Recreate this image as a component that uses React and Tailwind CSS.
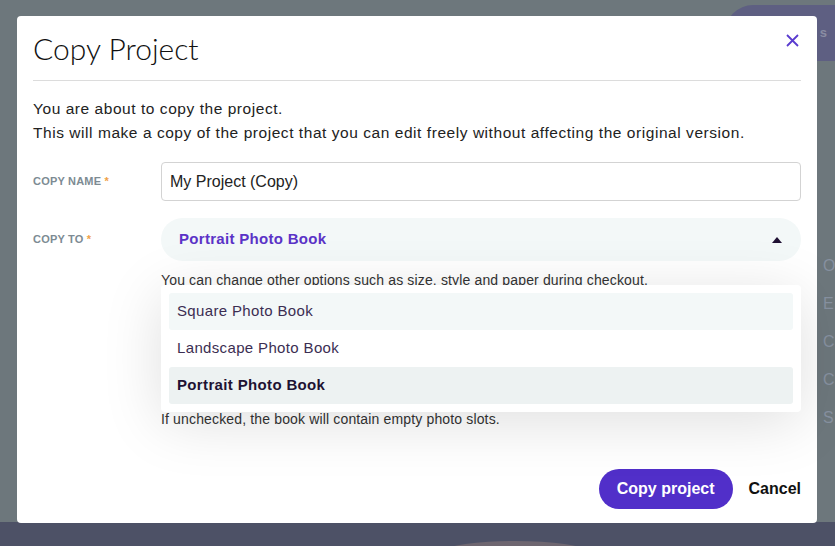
import React from 'react';

const sans = { fontFamily: '"Liberation Sans", Arial, sans-serif' };

const options = [
  { label: 'Square Photo Book', hover: true },
  { label: 'Landscape Photo Book' },
  { label: 'Portrait Photo Book', selected: true },
];

function FieldLabel({ children }) {
  return (
    <span className="w-[128px] shrink-0 text-[11px] font-bold uppercase tracking-[0.2px] text-[#7d8b93]">
      {children} <span className="text-[#f0a24a]">*</span>
    </span>
  );
}

export default function App() {
  return (
    <div className="relative w-[835px] h-[546px] overflow-hidden bg-[#6d777c]" style={sans}>
      {/* page behind the overlay */}
      <div className="flex h-full flex-col">
        <div className="flex flex-1 justify-end">
          <div className="flex flex-col items-end">
            <div className="mt-[5px] flex h-[56px] w-[110px] items-center justify-end rounded-l-[28px] bg-[#5e5f82] pr-[8px] text-[13px] font-bold text-[#8a8da3]">
              s
            </div>
            <div className="mt-[193px] flex w-[12px] flex-col gap-[14px] text-[16px] text-[#8791a0]">
              <span>O</span>
              <span>E</span>
              <span>C</span>
              <span>C</span>
              <span>S</span>
            </div>
          </div>
        </div>
        <div className="flex h-[24px] justify-center bg-[#4d5166]">
          <div className="ml-[194px] mt-[19px] h-[20px] w-[140px] rounded-t-[50%] bg-[#6e6670]" />
        </div>
      </div>

      {/* modal */}
      <div className="absolute inset-0 pl-[17px] pt-[16px]">
        <div className="flex h-[507px] w-[800px] flex-col rounded-[4px] bg-white px-[16px]">
          <div className="flex items-start justify-between border-b border-[#dcdcdc] pb-[14px] pt-[14px]">
            <h1 className="text-[30px] font-light leading-[36px] text-[#111]" style={{ fontFamily: 'Lato, "Liberation Sans", sans-serif' }}>
              Copy Project
            </h1>
            <button className="mr-[2px] mt-[4px] text-[#5a3ccf]">
              <svg width="13" height="13" viewBox="0 0 13 13" fill="none" stroke="currentColor" strokeWidth="1.8">
                <path d="M1 1l11 11M12 1L1 12" />
              </svg>
            </button>
          </div>

          <div className="pt-[16px] text-[15.5px] leading-[24px] tracking-[0.55px] text-[#222]">
            <p>You are about to copy the project.</p>
            <p>This will make a copy of the project that you can edit freely without affecting the original version.</p>
          </div>

          <div className="mt-[17px] flex items-center">
            <FieldLabel>Copy name</FieldLabel>
            <input
              className="h-[39px] flex-1 rounded-[4px] border border-[#d3d3d3] px-[8px] text-[16px] text-[#222] outline-none"
              defaultValue="My Project (Copy)"
            />
          </div>

          <div className="relative mt-[17px] flex items-start">
            <div className="flex h-[43px] items-center">
              <FieldLabel>Copy to</FieldLabel>
            </div>
            <div className="flex-1">
              <div className="flex h-[43px] items-center justify-between rounded-full bg-[#f3f8f8] pl-[18px] pr-[19px]">
                <span className="text-[15px] font-bold tracking-[0.3px] text-[#5b33c7]">Portrait Photo Book</span>
                <svg width="10" height="6" viewBox="0 0 10 6">
                  <path d="M0 6L5 0l5 6z" fill="#1f1033" />
                </svg>
              </div>
              <p className="mt-[11px] text-[14px] leading-[16px] tracking-[0.15px] text-[#333]">
                You can change other options such as size, style and paper during checkout.
              </p>
              <div className="h-[123px]" />
              <p className="text-[14px] leading-[16px] tracking-[0.15px] text-[#333]">
                If unchecked, the book will contain empty photo slots.
              </p>

              <ul className="absolute left-[128px] right-0 top-[67px] rounded-[4px] bg-white p-[8px] shadow-[0_10px_60px_rgba(0,0,0,0.13)]">
                {options.map((o) => (
                  <li
                    key={o.label}
                    className={
                      'flex h-[37px] items-center rounded-[3px] px-[8px] text-[15px] tracking-[0.35px] ' +
                      (o.selected
                        ? 'bg-[#edf2f2] font-bold text-[#1e1233]'
                        : o.hover
                        ? 'bg-[#f3f8f8] text-[#3b2e52]'
                        : 'text-[#3b2e52]')
                    }
                  >
                    {o.label}
                  </li>
                ))}
              </ul>
            </div>
          </div>

          <div className="mt-auto mb-[14px] flex items-center justify-end gap-[16px]">
            <button className="h-[40px] rounded-full bg-[#512fc9] px-[18px] text-[16px] font-bold text-white">
              Copy project
            </button>
            <button className="text-[16px] font-bold text-[#111]">Cancel</button>
          </div>
        </div>
      </div>
    </div>
  );
}
